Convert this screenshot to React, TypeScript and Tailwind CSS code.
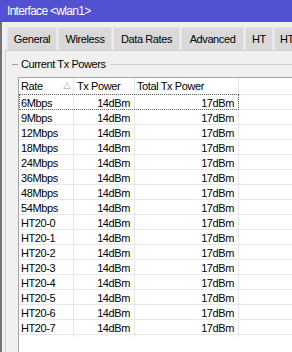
import React from "react";

const rows: [string, string, string][] = [
  ["6Mbps", "14dBm", "17dBm"],
  ["9Mbps", "14dBm", "17dBm"],
  ["12Mbps", "14dBm", "17dBm"],
  ["18Mbps", "14dBm", "17dBm"],
  ["24Mbps", "14dBm", "17dBm"],
  ["36Mbps", "14dBm", "17dBm"],
  ["48Mbps", "14dBm", "17dBm"],
  ["54Mbps", "14dBm", "17dBm"],
  ["HT20-0", "14dBm", "17dBm"],
  ["HT20-1", "14dBm", "17dBm"],
  ["HT20-2", "14dBm", "17dBm"],
  ["HT20-3", "14dBm", "17dBm"],
  ["HT20-4", "14dBm", "17dBm"],
  ["HT20-5", "14dBm", "17dBm"],
  ["HT20-6", "14dBm", "17dBm"],
  ["HT20-7", "14dBm", "17dBm"],
];

const tabs = [
  { label: "General", w: "w-[50px] justify-center" },
  { label: "Wireless", w: "w-[54px] justify-center" },
  { label: "Data Rates", w: "w-[67px] justify-center" },
  { label: "Advanced", w: "w-[63px] justify-center" },
  { label: "HT", w: "w-[28px] justify-center" },
  { label: "HT", w: "w-[40px] justify-start pl-[5px]" },
];

export default function App() {
  return (
    <div
      className="w-[292px] h-[352px] overflow-hidden bg-[#f0f0f0] text-[11px] tracking-[-0.4px] text-black flex flex-col"
      style={{ fontFamily: '"Liberation Sans", Arial, sans-serif' }}
    >
      <div className="h-[22px] shrink-0 bg-[#5151d1] text-white flex items-center pl-[7px] text-[12px] tracking-[-0.7px]">
        Interface &lt;wlan1&gt;
      </div>
      <div className="flex-1 flex flex-col border-l-2 border-[#747474] min-h-0">
        <div className="h-[28px] shrink-0 pt-[5px] pl-[5px] flex gap-[1px] overflow-hidden">
          {tabs.map((t, i) => (
            <div
              key={i}
              className={`${t.w} shrink-0 h-[23px] bg-[#d9d9d9] border-t border-x border-[#e4e4e4] flex items-center whitespace-nowrap overflow-hidden`}
            >
              {t.label}
            </div>
          ))}
        </div>
        <div className="flex-1 ml-[3px] border-l border-t border-[#d0d0d0] bg-[#f0f0f0] flex flex-col min-h-0">
          <div className="h-[26px] shrink-0 flex items-center pl-[6px]">
            <div className="w-[6px] h-px bg-[#a0a0a0]" />
            <span className="px-[2px] ml-[1px]">Current Tx Powers</span>
            <div className="flex-1 h-px bg-[#d0d0d0] ml-[2px]" />
          </div>
          <div className="flex-1 ml-[12px] border-l border-t border-[#a5a5a5] bg-white min-h-0">
            <div className="grid grid-cols-[55px_61px_104px_1fr] h-[17px] border-b border-[#e5e5e5]">
              <div className="border-r border-[#e5e5e5] pl-[2px] flex items-center justify-between pr-[2px]">
                <span>Rate</span>
                <svg width="8" height="7" viewBox="0 0 8 7" className="mt-[-1px]">
                  <path d="M0.5 6.5 L4 0.8 L7.5 6.5 Z" fill="none" stroke="#c4c4c4" strokeWidth="1" />
                </svg>
              </div>
              <div className="border-r border-[#e5e5e5] pl-[3px] flex items-center">Tx Power</div>
              <div className="border-r border-[#e5e5e5] pl-[2px] flex items-center whitespace-nowrap">Total Tx Power</div>
              <div />
            </div>
            {rows.map((r, i) => (
              <div
                key={r[0]}
                className="relative grid grid-cols-[55px_61px_104px_1fr] h-[15px] border-b border-[#e8e8e8]"
              >
                <div className="border-r border-[#e8e8e8] pl-[2px] flex items-center">{r[0]}</div>
                <div className="border-r border-[#e8e8e8] pr-[4px] flex items-center justify-end">{r[1]}</div>
                <div className="border-r border-[#e8e8e8] pr-[4px] flex items-center justify-end">{r[2]}</div>
                <div />
                {i === 0 && (
                  <div className="absolute left-0 top-[-1px] w-[220px] h-[16px] border border-dotted border-[#6a6a6a] pointer-events-none" />
                )}
              </div>
            ))}
          </div>
        </div>
      </div>
    </div>
  );
}
